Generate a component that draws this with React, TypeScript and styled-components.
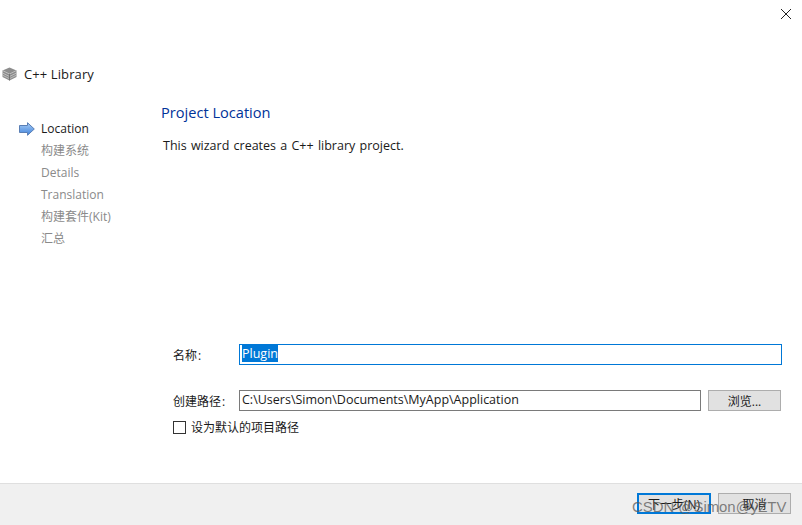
import React from "react";
import styled, { createGlobalStyle } from "styled-components";

const Global = createGlobalStyle`
  html, body { margin: 0; padding: 0; background: #fff; }
  body { font-family: "Open Sans", "Noto Sans CJK SC", sans-serif; font-size: 12px; color: #1a1a1a; }
`;

const Window = styled.div`
  position: relative;
  width: 802px;
  height: 525px;
  display: flex;
  flex-direction: column;
  overflow: hidden;
  background: #fff;
`;
const TitleBar = styled.div`
  height: 28px;
  display: flex;
  justify-content: flex-end;
  padding: 9px 11px 0 0;
  box-sizing: border-box;
`;
const HeaderRow = styled.div`
  display: flex;
  align-items: center;
  gap: 7px;
  height: 20px;
  margin: 36px 0 1px;
  padding-left: 2px;
`;
const HeaderTitle = styled.span`
  font-size: 13px;
  letter-spacing: 0.1px;
  color: #1a1a1a;
`;
const Content = styled.div`
  display: flex;
  flex: 1;
  min-height: 0;
`;
const Sidebar = styled.ul`
  list-style: none;
  margin: 0;
  padding: 33px 0 0 19px;
  width: 161px;
  flex: none;
  box-sizing: border-box;
`;
const Step = styled.li<{ $active?: boolean }>`
  height: 22px;
  line-height: 22px;
  display: flex;
  align-items: center;
  gap: 6px;
  padding-left: ${(p) => (p.$active ? 0 : 22)}px;
  color: ${(p) => (p.$active ? "#1a1a1a" : "#8a8a8a")};
`;
const Main = styled.div`
  flex: 1;
  display: flex;
  flex-direction: column;
  padding: 16px 20px 0 0;
`;
const PageTitle = styled.h1`
  margin: 0;
  font-size: 14.6px;
  font-weight: 400;
  line-height: 22px;
  color: #003399;
`;
const Description = styled.p`
  margin: 13px 0 0 2px;
  font-size: 12.5px;
  word-spacing: 1px;
  line-height: 20px;
  color: #1a1a1a;
`;
const Form = styled.div`
  margin: 188px 0 0 12px;
  display: flex;
  flex-direction: column;
`;
const FormRow = styled.div`
  display: flex;
  align-items: center;
  height: 21px;
  margin-bottom: 25px;
  &:nth-child(2) { margin-bottom: 0; }
`;
const FieldLabel = styled.label`
  width: 66px;
  flex: none;
  color: #1a1a1a;
`;
const Colon = styled.span`
  margin-left: 1px;
`;
const InputBox = styled.div<{ $focused?: boolean }>`
  flex: 1;
  height: 21px;
  box-sizing: border-box;
  border: 1px solid ${(p) => (p.$focused ? "#0078d7" : "#7a7a7a")};
  padding: 0 2px;
  font-size: 12.5px;
  line-height: 18px;
  white-space: nowrap;
  color: #1a1a1a;
`;
const Selected = styled.span`
  background: #0078d7;
  color: #fff;
`;
const BrowseButton = styled.button`
  width: 73px;
  height: 21px;
  margin: 0 1px 0 7px;
  box-sizing: border-box;
  border: 1px solid #adadad;
  background: #e1e1e1;
  font: inherit;
  padding: 0;
  color: #1a1a1a;
`;
const CheckRow = styled.div`
  display: flex;
  align-items: center;
  gap: 5px;
  height: 20px;
  margin-top: 6px;
`;
const CheckBox = styled.span`
  width: 13px;
  height: 13px;
  box-sizing: border-box;
  border: 1px solid #333;
  background: #fff;
`;
const Footer = styled.div`
  height: 42px;
  flex: none;
  box-sizing: border-box;
  background: #f0f0f0;
  border-top: 1px solid #dfdfdf;
  display: flex;
  justify-content: flex-end;
  gap: 7px;
  padding: 9px 11px 0 0;
`;
const FooterButton = styled.button<{ $primary?: boolean }>`
  width: ${(p) => (p.$primary ? 74 : 73)}px;
  height: 21px;
  box-sizing: border-box;
  border: ${(p) => (p.$primary ? "2px solid #0078d7" : "1px solid #adadad")};
  background: #e1e1e1;
  font: inherit;
  padding: 0;
  color: #1a1a1a;
`;
const Watermark = styled.div`
  position: absolute;
  left: 632px;
  top: 498px;
  font-family: "Liberation Sans", sans-serif;
  font-size: 14.9px;
  line-height: 18px;
  color: rgba(90, 90, 90, 0.75);
  white-space: nowrap;
`;

const CloseIcon = () => (
  <svg width="10" height="10" viewBox="0 0 10 10">
    <path d="M0 0L10 10M10 0L0 10" stroke="#222" strokeWidth="1" fill="none" />
  </svg>
);
const CubeIcon = () => (
  <svg width="15" height="14" viewBox="0 0 15 14">
    <path d="M7.5 0.5L14.5 3.5V10L7.5 13.5L0.5 10V3.5Z" fill="#8d8d8d" />
    <path d="M0.5 3.5L7.5 7L14.5 3.5M0.5 6L7.5 9.5L14.5 6M0.5 8.2L7.5 11.7L14.5 8.2" stroke="#c9c9c9" strokeWidth="0.8" fill="none" />
    <path d="M7.5 7V13.5" stroke="#666" strokeWidth="0.8" />
  </svg>
);
const ArrowIcon = () => (
  <svg width="16" height="14" viewBox="0 0 16 14">
    <defs>
      <linearGradient id="arr" x1="0" y1="0" x2="0" y2="1">
        <stop offset="0" stopColor="#a8cdf5" />
        <stop offset="1" stopColor="#3f82dc" />
      </linearGradient>
    </defs>
    <path d="M0.5 3.5H8.5V0.7L15.3 7L8.5 13.3V10.5H0.5Z" fill="url(#arr)" stroke="#5a7fb5" strokeWidth="1" />
  </svg>
);

const steps = ["构建系统", "Details", "Translation", "构建套件(Kit)", "汇总"];

export default function App() {
  return (
    <Window>
      <Global />
      <TitleBar>
        <CloseIcon />
      </TitleBar>
      <HeaderRow>
        <CubeIcon />
        <HeaderTitle>C++ Library</HeaderTitle>
      </HeaderRow>
      <Content>
        <Sidebar>
          <Step $active>
            <ArrowIcon />
            Location
          </Step>
          {steps.map((s) => (
            <Step key={s}>{s}</Step>
          ))}
        </Sidebar>
        <Main>
          <PageTitle>Project Location</PageTitle>
          <Description>This wizard creates a C++ library project.</Description>
          <Form>
            <FormRow>
              <FieldLabel>名称<Colon>:</Colon></FieldLabel>
              <InputBox $focused>
                <Selected>Plugin</Selected>
              </InputBox>
            </FormRow>
            <FormRow>
              <FieldLabel>创建路径<Colon>:</Colon></FieldLabel>
              <InputBox>C:\Users\Simon\Documents\MyApp\Application</InputBox>
              <BrowseButton>浏览...</BrowseButton>
            </FormRow>
            <CheckRow>
              <CheckBox />
              设为默认的项目路径
            </CheckRow>
          </Form>
        </Main>
      </Content>
      <Footer>
        <FooterButton $primary>下一步(N)</FooterButton>
        <FooterButton>取消</FooterButton>
      </Footer>
      <Watermark>CSDN @Simon@yZTV</Watermark>
    </Window>
  );
}
